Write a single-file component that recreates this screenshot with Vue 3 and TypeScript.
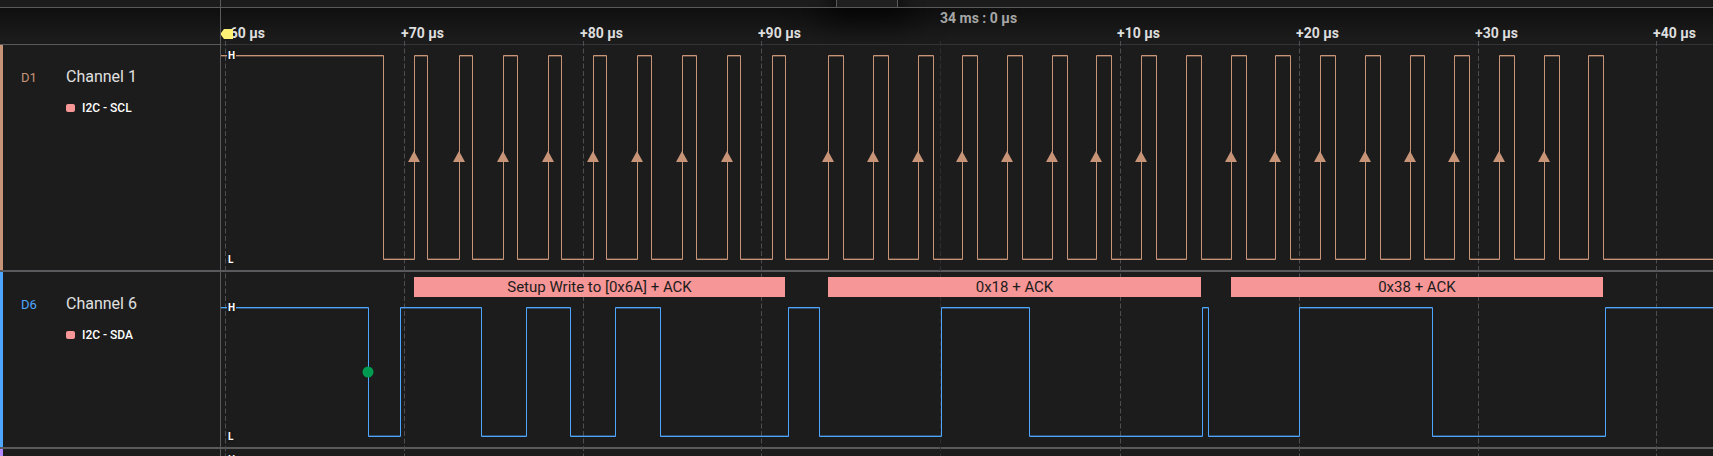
<script setup lang="ts">
interface Sample {
  x: number
  level: 'H' | 'L'
}
interface Bubble {
  from: number
  to: number
  text: string
}
interface Channel {
  id: string
  name: string
  analyzer: string
  tone: string
  height: number
  high: number
  low: number
  initial: 'H' | 'L'
  edges: number[]
  arrows: number[]
  dots: number[]
  bubbles: Bubble[]
}

// Horizontal span of the visible capture, in timeline units.
const SPAN = 1492
const pct = (x: number): string => `${(x / SPAN) * 100}%`

const ticks = [
  { x: 4, label: '+60 µs', major: false },
  { x: 183, label: '+70 µs', major: false },
  { x: 362, label: '+80 µs', major: false },
  { x: 540, label: '+90 µs', major: false },
  { x: 719, label: '34 ms : 0 µs', major: true },
  { x: 899, label: '+10 µs', major: false },
  { x: 1078, label: '+20 µs', major: false },
  { x: 1257, label: '+30 µs', major: false },
  { x: 1435, label: '+40 µs', major: false },
]

const sclRises = [
  193, 238, 282, 327, 372, 416, 461, 506, 551,
  607, 652, 697, 741, 786, 831, 875, 920, 965,
  1010, 1054, 1099, 1144, 1189, 1233, 1278, 1323, 1367,
]
const sclFalls = [
  206, 251, 296, 340, 385, 430, 475, 519, 564,
  622, 667, 712, 756, 801, 846, 890, 935, 980,
  1025, 1069, 1114, 1159, 1203, 1248, 1293, 1338, 1382,
]

const channels: Channel[] = [
  {
    id: 'D1', name: 'Channel 1', analyzer: 'I2C - SCL', tone: 'copper',
    height: 225, high: 10, low: 214, initial: 'H',
    edges: [162, ...sclRises.flatMap((r, i) => [r, sclFalls[i]])],
    // Data bits are sampled on every clock except the ninth one.
    arrows: sclRises.filter((_, i) => i % 9 !== 8),
    dots: [], bubbles: [],
  },
  {
    id: 'D6', name: 'Channel 6', analyzer: 'I2C - SDA', tone: 'blue',
    height: 175, high: 35, low: 164, initial: 'H',
    edges: [147, 179, 260, 305, 349, 394, 439, 567, 598, 720, 808, 981, 987, 1078, 1211, 1384],
    arrows: [], dots: [147],
    bubbles: [
      { from: 193, to: 564, text: 'Setup Write to [0x6A] + ACK' },
      { from: 607, to: 980, text: '0x18 + ACK' },
      { from: 1010, to: 1382, text: '0x38 + ACK' },
    ],
  },
]

function samples(ch: Channel): Sample[] {
  let level = ch.initial
  return ch.edges.map((x) => {
    level = level === 'H' ? 'L' : 'H'
    return { x, level }
  })
}

function wave(ch: Channel): string {
  const y = (l: 'H' | 'L') => (l === 'H' ? ch.high : ch.low) + 0.5
  return `M0 ${y(ch.initial)}` + samples(ch).map((s) => `H${s.x + 0.5}V${y(s.level)}`).join('') + `H${SPAN}`
}

// Soft inner edge that runs along the flat parts of the wave.
function halo(ch: Channel): string {
  const y = (l: 'H' | 'L') => (l === 'H' ? ch.high + 1 : ch.low - 1) + 0.5
  let d = `M0 ${y(ch.initial)}`
  for (const s of samples(ch)) d += `H${s.x}M${s.x + 1} ${y(s.level)}`
  return `${d}H${SPAN}`
}
</script>

<template>
  <main class="analyzer">
    <div class="strip"><span class="strip-side"></span><span class="strip-body"><i class="handle"></i></span></div>

    <section class="workspace">
      <header class="axis">
        <div class="axis-side"></div>
        <div class="axis-body">
          <div class="glow"></div>
          <span
            v-for="t in ticks" :key="t.label" class="tick-label" :class="{ major: t.major }"
            :style="{ left: pct(t.x) }"
          >{{ t.label }}</span>
          <svg class="marker" viewBox="0 0 12 10" aria-hidden="true"><path d="M3 0H12V10H3L0 6V4Z" /></svg>
        </div>
      </header>

      <div class="grid" aria-hidden="true">
        <svg width="100%" height="100%">
          <line
            v-for="t in ticks" :key="t.label" :class="{ major: t.major }"
            :x1="pct(t.x + 0.5)" :x2="pct(t.x + 0.5)" y1="0" y2="100%"
          />
        </svg>
      </div>

      <article v-for="ch in channels" :key="ch.id" class="channel" :class="ch.tone">
        <div class="info">
          <span class="id">{{ ch.id }}</span>
          <div class="names">
            <h2>{{ ch.name }}</h2>
            <p><i class="swatch"></i>{{ ch.analyzer }}</p>
          </div>
        </div>
        <div class="plot" :style="{ height: ch.height + 'px' }">
          <svg
            class="trace" :viewBox="`0 0 ${SPAN} ${ch.height}`" preserveAspectRatio="none"
            role="img" :aria-label="`${ch.name} signal`"
          >
            <path class="halo" :d="halo(ch)" />
            <path class="wave" :d="wave(ch)" />
          </svg>
          <svg class="trace" aria-hidden="true">
            <svg v-for="x in ch.arrows" :key="x" class="pin" :x="pct(x)" y="106">
              <path class="arrow" d="M0 0L6 11H-6Z" />
            </svg>
            <svg v-for="x in ch.dots" :key="x" class="pin" :x="pct(x)" y="100">
              <circle class="dot" r="5.5" />
            </svg>
          </svg>
          <span class="level" :style="{ top: ch.high + 'px' }">H</span>
          <span class="level" :style="{ top: ch.low + 'px' }">L</span>
          <div
            v-for="b in ch.bubbles" :key="b.from" class="bubble"
            :style="{ left: pct(b.from), width: pct(b.to - b.from) }"
          >{{ b.text }}</div>
        </div>
      </article>

      <article class="channel violet">
        <div class="info"></div>
        <div class="plot next"><span class="level">H</span></div>
      </article>
    </section>
  </main>
</template>

<style>
html,
body {
  background: #1c1c1c;
}
body {
  margin: 0;
}
</style>

<style scoped>
.analyzer {
  height: 100vh;
  overflow: hidden;
  display: flex;
  flex-direction: column;
  background: #1c1c1c;
  color: #e0e0e0;
  font-family: Roboto, "Liberation Sans", sans-serif;
}
.strip,
.axis,
.channel {
  display: grid;
  grid-template-columns: 221px 1fr;
}
.strip {
  flex: none;
  height: 7px;
  border-bottom: 1px solid #5a5a5d;
}
.strip-side {
  border-right: 1px solid #5a5a5d;
}
.strip-body {
  position: relative;
  overflow: hidden;
}
.handle {
  position: absolute;
  left: calc(100% * 615 / 1492);
  top: 0;
  width: 60px;
  height: 100%;
  border: solid #5a5a5d;
  border-width: 0 1px;
  background: #1f1f1f;
  box-shadow: 0 0 20px 4px #000;
}
.workspace {
  position: relative;
  flex: 1;
}
.axis {
  height: 37px;
  background: linear-gradient(#0f0f0f, #1b1b1b 80%);
}
.axis-side {
  box-sizing: border-box;
  border-right: 1px solid #5a5a5d;
  border-bottom: 1px solid #5a5a5d;
}
.axis-body {
  position: relative;
  box-sizing: border-box;
  border-bottom: 1px solid #333337;
  overflow: hidden;
}
.glow {
  position: absolute;
  left: calc(100% * 616 / 1492);
  top: -12px;
  width: 60px;
  height: 8px;
  box-shadow: 0 0 32px 16px rgba(0, 0, 0, 0.8);
}
.tick-label {
  position: absolute;
  z-index: 2;
  top: 17px;
  margin-left: -3px;
  font-size: 14px;
  font-weight: 700;
  line-height: 16px;
  white-space: nowrap;
  color: #dedede;
}
.tick-label.major {
  top: 2px;
  margin-left: 0;
  color: #a6a6a6;
}
.marker {
  position: absolute;
  z-index: 3;
  left: 0;
  top: 21px;
  width: 12px;
  height: 10px;
  fill: #fff176;
}
.grid {
  position: absolute;
  left: 221px;
  right: 0;
  top: 33px;
  bottom: 0;
  pointer-events: none;
}
.grid svg {
  display: block;
}
.grid line {
  stroke: #4e4e52;
  stroke-dasharray: 5 2.5;
}
.grid line.major {
  stroke: #2f2f32;
}
.channel {
  border-bottom: 2px solid #5a5a5d;
}
.info {
  display: flex;
  box-sizing: border-box;
  padding: 22px 0 0 18px;
  border-left: 3px solid var(--tone);
  border-right: 1px solid #5a5a5d;
}
.copper {
  --tone: #c89478;
}
.blue {
  --tone: #4fa6ff;
}
.violet {
  --tone: #b388ff;
  border-bottom: 0;
}
.violet .info {
  padding: 0;
}
.id {
  width: 45px;
  padding-top: 2px;
  font-size: 13px;
  line-height: 18px;
  color: var(--tone);
}
h2 {
  margin: 0;
  font-size: 16px;
  line-height: 20px;
  font-weight: 400;
}
p {
  display: flex;
  align-items: center;
  gap: 7px;
  margin: 13px 0 0;
  font-size: 12px;
  line-height: 16px;
  font-weight: 500;
  color: #fff;
}
.swatch {
  width: 9px;
  height: 8px;
  border-radius: 2px;
  background: #f79696;
}
.plot {
  position: relative;
}
.plot.next {
  height: 7px;
}
.trace {
  position: absolute;
  inset: 0;
  width: 100%;
  height: 100%;
}
.wave,
.halo {
  fill: none;
  stroke: var(--tone);
  stroke-width: 1px;
  vector-effect: non-scaling-stroke;
}
.halo {
  opacity: 0.35;
}
.pin {
  overflow: visible;
}
.arrow {
  fill: var(--tone);
}
.dot {
  fill: #009b50;
}
.level {
  position: absolute;
  left: 6px;
  margin-top: -6px;
  padding: 0 1px;
  font-size: 10px;
  line-height: 13px;
  font-weight: 700;
  color: #fff;
  background: #1a1a1a;
}
.next .level {
  top: 10px;
}
.bubble {
  position: absolute;
  top: 5px;
  height: 20px;
  font-size: 15px;
  line-height: 20px;
  text-align: center;
  white-space: nowrap;
  overflow: hidden;
  color: #1c1c1c;
  background: #f79696;
}
</style>
